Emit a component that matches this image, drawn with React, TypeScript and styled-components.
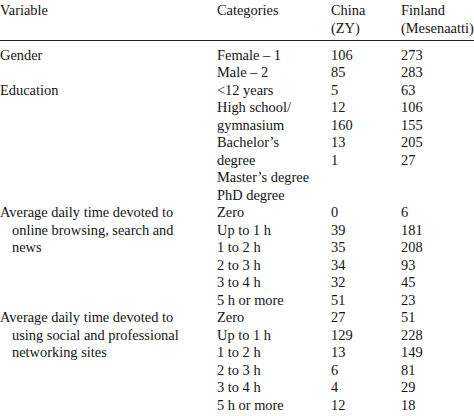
import React from "react";
import styled, { createGlobalStyle } from "styled-components";

const Global = createGlobalStyle`
  html, body { margin: 0; padding: 0; background: #ffffff; }
  body {
    font-family: "Liberation Serif", "Times New Roman", serif;
    color: #141414;
    font-size: 14.4px;
    line-height: 17.5px;
  }
`;

const Table = styled.div`
  width: 474px;
  display: flex;
  flex-direction: column;
`;

const HeaderRow = styled.div`
  display: grid;
  grid-template-columns: 217px 114px 70px 1fr;
  padding-top: 2px;
  padding-bottom: 3px;
  border-bottom: 1.6px solid #1e1e1e;
  white-space: nowrap;
`;

const HeadCell = styled.div`
  display: flex;
  flex-direction: column;
`;

const Body = styled.div`
  padding-top: 5.5px;
  display: flex;
  flex-direction: column;
`;

const Group = styled.div`
  display: grid;
  grid-template-columns: 217px 1fr;
`;

const VarLabel = styled.div`
  width: 190px;
  padding-left: 12px;
  text-indent: -12px;
`;

const Rows = styled.div`
  display: flex;
  flex-direction: column;
`;

const Row = styled.div`
  display: grid;
  grid-template-columns: 114px 70px 1fr;
  height: 17.5px;
  white-space: nowrap;
`;

type R = [string, string, string];

const groups: { label: string; rows: R[] }[] = [
  {
    label: "Gender",
    rows: [
      ["Female \u2013 1", "106", "273"],
      ["Male \u2013 2", "85", "283"],
    ],
  },
  {
    label: "Education",
    rows: [
      ["<12 years", "5", "63"],
      ["High school/", "12", "106"],
      ["gymnasium", "160", "155"],
      ["Bachelor\u2019s", "13", "205"],
      ["degree", "1", "27"],
      ["Master\u2019s degree", "", ""],
      ["PhD degree", "", ""],
    ],
  },
  {
    label: "Average daily time devoted to online browsing, search and news",
    rows: [
      ["Zero", "0", "6"],
      ["Up to 1 h", "39", "181"],
      ["1 to 2 h", "35", "208"],
      ["2 to 3 h", "34", "93"],
      ["3 to 4 h", "32", "45"],
      ["5 h or more", "51", "23"],
    ],
  },
  {
    label:
      "Average daily time devoted to using social and professional networking sites",
    rows: [
      ["Zero", "27", "51"],
      ["Up to 1 h", "129", "228"],
      ["1 to 2 h", "13", "149"],
      ["2 to 3 h", "6", "81"],
      ["3 to 4 h", "4", "29"],
      ["5 h or more", "12", "18"],
    ],
  },
];

export default function App() {
  return (
    <>
      <Global />
      <Table>
        <HeaderRow>
          <HeadCell>Variable</HeadCell>
          <HeadCell>Categories</HeadCell>
          <HeadCell>
            <span>China</span>
            <span>(ZY)</span>
          </HeadCell>
          <HeadCell>
            <span>Finland</span>
            <span>(Mesenaatti)</span>
          </HeadCell>
        </HeaderRow>
        <Body>
          {groups.map((g) => (
            <Group key={g.label}>
              <VarLabel>{g.label}</VarLabel>
              <Rows>
                {g.rows.map((r, i) => (
                  <Row key={i}>
                    <span>{r[0]}</span>
                    <span>{r[1]}</span>
                    <span>{r[2]}</span>
                  </Row>
                ))}
              </Rows>
            </Group>
          ))}
        </Body>
      </Table>
    </>
  );
}
